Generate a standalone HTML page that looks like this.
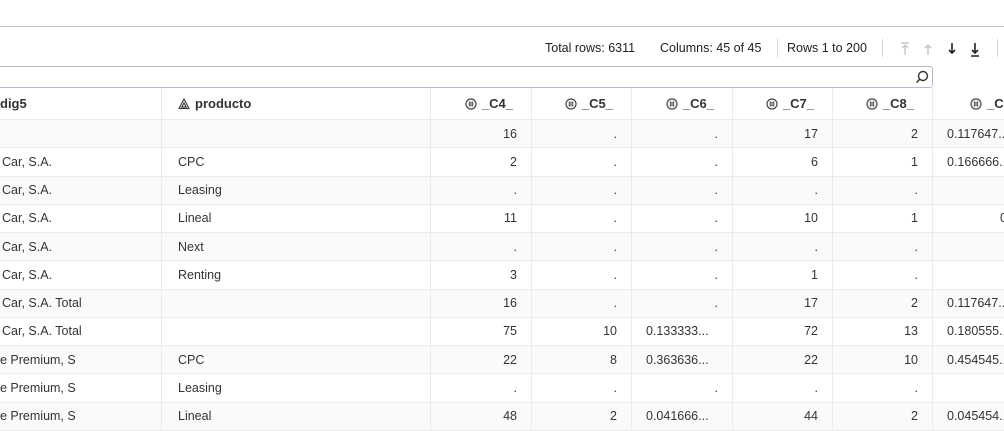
<!DOCTYPE html>
<html><head><meta charset="utf-8"><style>
*{margin:0;padding:0;box-sizing:border-box}
body{width:1004px;height:429px;overflow:hidden;background:#fff;font-family:"Liberation Sans",sans-serif;font-size:12.5px;color:#333;position:relative}
.hl{position:absolute;left:0;width:1004px;height:1px;background:#c4c7d0;top:26px}
.tb{position:absolute;top:41px;font-size:12.5px;color:#222;white-space:nowrap}
.sep{position:absolute;top:39px;width:1px;height:18px;background:#d6d6d6}
.search{position:absolute;left:-10px;top:66px;width:943px;height:22px;border:1px solid #b7bcc8;border-radius:3px}
.grid{position:absolute;left:-38px;top:88px}
.row{display:flex;height:28.25px;border-bottom:1px solid #ebebeb}
.row.h{height:32px;font-weight:bold;font-size:13px}
.row.g{background:#fafafa}
.c{border-right:1px solid #ebebeb;padding:0 14px;display:flex;align-items:center;white-space:nowrap;overflow:hidden;flex-shrink:0}
.r{justify-content:flex-end}
.w0{width:200px;padding-left:40px}.w1{width:269px;padding-left:16px}.w2{width:101px}.w3{width:100px}.w4{width:101px}.w5{width:100px}.w6{width:100px}.w7{width:110px;border-right:none}
.h .r{padding-right:18px}
.h .w0{padding-left:38px}
.l{justify-content:flex-start}
.ic{margin-right:5px;flex-shrink:0}
</style></head><body>
<svg width="0" height="0" style="position:absolute"><defs><symbol id="n" viewBox="0 0 12 12"><circle cx="6" cy="6" r="5" stroke="#444" stroke-width="1.2" fill="none"/><path d="M4.8 3.3v5.4M7.2 3.3v5.4M3.4 4.9h5.2M3.4 7.1h5.2" stroke="#444" stroke-width="0.9"/></symbol></defs></svg>
<div class="hl"></div>
<div class="tb" style="left:545px">Total rows: 6311</div>
<div class="tb" style="left:660px">Columns: 45 of 45</div>
<div class="sep" style="left:777px"></div>
<div class="tb" style="left:787px">Rows 1 to 200</div>
<div class="sep" style="left:882px"></div>
<svg style="position:absolute;left:898px;top:40px" width="90" height="18" viewBox="0 0 90 18">
<g stroke="#c8c8c8" stroke-width="1.5" fill="none"><path d="M3 3h8M7 5v10M4 8l3-3 3 3"/><path d="M30 5v10M27 8l3-3 3 3"/></g>
<g stroke="#222" stroke-width="1.6" fill="none"><path d="M54 3v10M51 10l3 3 3-3"/><path d="M77 3v10M74 10l3 3 3-3M73 16h8"/></g>
</svg>
<div class="sep" style="left:997px"></div>
<div class="search"></div>
<svg style="position:absolute;left:914px;top:69px" width="16" height="16" viewBox="0 0 16 16"><circle cx="9" cy="7" r="4.5" stroke="#333" stroke-width="1.4" fill="none"/><path d="M5.8 10.2L2.5 13.5" stroke="#333" stroke-width="1.5"/></svg>
<div class="grid">
<div class="row h"><div class="c w0">dig5</div><div class="c w1"><svg width="12" height="12" viewBox="0 0 12 12" style="margin-right:5px"><path d="M6 1L1 10.5h10z M6 5L3.8 9h4.4z" stroke="#444" stroke-width="1.2" fill="none"/></svg>producto</div><div class="c w2 r"><svg class="ic" width="12" height="12"><use href="#n"/></svg>_C4_</div><div class="c w3 r"><svg class="ic" width="12" height="12"><use href="#n"/></svg>_C5_</div><div class="c w4 r"><svg class="ic" width="12" height="12"><use href="#n"/></svg>_C6_</div><div class="c w5 r"><svg class="ic" width="12" height="12"><use href="#n"/></svg>_C7_</div><div class="c w6 r"><svg class="ic" width="12" height="12"><use href="#n"/></svg>_C8_</div><div class="c w7 l" style="padding-left:37px"><svg class="ic" width="12" height="12"><use href="#n"/></svg>_C9_</div></div>
<div class="row g"><div class="c w0"></div><div class="c w1"></div><div class="c w2 r">16</div><div class="c w3 r">.</div><div class="c w4 r">.</div><div class="c w5 r">17</div><div class="c w6 r">2</div><div class="c w7 l">0.117647...</div></div>
<div class="row"><div class="c w0">Car, S.A.</div><div class="c w1">CPC</div><div class="c w2 r">2</div><div class="c w3 r">.</div><div class="c w4 r">.</div><div class="c w5 r">6</div><div class="c w6 r">1</div><div class="c w7 l">0.166666...</div></div>
<div class="row g"><div class="c w0">Car, S.A.</div><div class="c w1">Leasing</div><div class="c w2 r">.</div><div class="c w3 r">.</div><div class="c w4 r">.</div><div class="c w5 r">.</div><div class="c w6 r">.</div><div class="c w7"></div></div>
<div class="row"><div class="c w0">Car, S.A.</div><div class="c w1">Lineal</div><div class="c w2 r">11</div><div class="c w3 r">.</div><div class="c w4 r">.</div><div class="c w5 r">10</div><div class="c w6 r">1</div><div class="c w7 l" style="padding-left:67px">0.1</div></div>
<div class="row g"><div class="c w0">Car, S.A.</div><div class="c w1">Next</div><div class="c w2 r">.</div><div class="c w3 r">.</div><div class="c w4 r">.</div><div class="c w5 r">.</div><div class="c w6 r">.</div><div class="c w7"></div></div>
<div class="row"><div class="c w0">Car, S.A.</div><div class="c w1">Renting</div><div class="c w2 r">3</div><div class="c w3 r">.</div><div class="c w4 r">.</div><div class="c w5 r">1</div><div class="c w6 r">.</div><div class="c w7"></div></div>
<div class="row g"><div class="c w0">Car, S.A. Total</div><div class="c w1"></div><div class="c w2 r">16</div><div class="c w3 r">.</div><div class="c w4 r">.</div><div class="c w5 r">17</div><div class="c w6 r">2</div><div class="c w7 l">0.117647...</div></div>
<div class="row"><div class="c w0">Car, S.A. Total</div><div class="c w1"></div><div class="c w2 r">75</div><div class="c w3 r">10</div><div class="c w4 l">0.133333...</div><div class="c w5 r">72</div><div class="c w6 r">13</div><div class="c w7 l">0.180555...</div></div>
<div class="row g"><div class="c w0" style="padding-left:38px">e Premium, S</div><div class="c w1">CPC</div><div class="c w2 r">22</div><div class="c w3 r">8</div><div class="c w4 l">0.363636...</div><div class="c w5 r">22</div><div class="c w6 r">10</div><div class="c w7 l">0.454545...</div></div>
<div class="row"><div class="c w0" style="padding-left:38px">e Premium, S</div><div class="c w1">Leasing</div><div class="c w2 r">.</div><div class="c w3 r">.</div><div class="c w4 r">.</div><div class="c w5 r">.</div><div class="c w6 r">.</div><div class="c w7"></div></div>
<div class="row g"><div class="c w0" style="padding-left:38px">e Premium, S</div><div class="c w1">Lineal</div><div class="c w2 r">48</div><div class="c w3 r">2</div><div class="c w4 l">0.041666...</div><div class="c w5 r">44</div><div class="c w6 r">2</div><div class="c w7 l">0.045454...</div></div>
</div>
</body></html>
